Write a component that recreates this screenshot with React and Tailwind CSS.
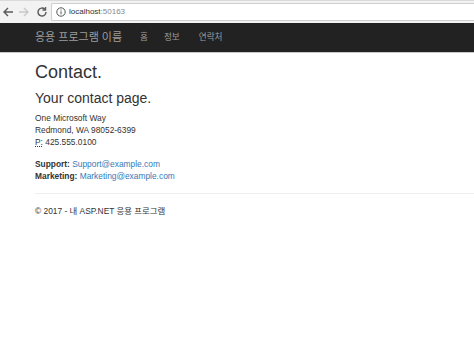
import React from "react";

export default function App() {
  const font = { fontFamily: '"Liberation Sans", "Noto Sans CJK KR", Arial, sans-serif' };
  return (
    <div className="w-[474px] h-[337px] bg-white overflow-hidden text-[#333]" style={font}>
      {/* browser toolbar */}
      <div className="h-[23px] bg-[#f2f2f2] border-t border-[#dadada] flex items-center">
        <div className="flex items-center gap-[4px] pl-[2px] w-[51px]">
          <svg width="12" height="12" viewBox="0 0 12 12" fill="none" stroke="#5a5a5a" strokeWidth="1.4">
            <path d="M11 6H2M6 2L2 6l4 4" />
          </svg>
          <svg width="12" height="12" viewBox="0 0 12 12" fill="none" stroke="#c8c8c8" strokeWidth="1.4">
            <path d="M1 6h9M6 2l4 4-4 4" />
          </svg>
          <svg width="12" height="12" viewBox="0 0 12 12" fill="none" stroke="#5a5a5a" strokeWidth="1.4" className="ml-[2px]">
            <path d="M10 6a4 4 0 1 1-1.2-2.8" />
            <path d="M9.5 1v3h-3" />
          </svg>
        </div>
        <div className="flex-1 h-[18px] bg-white border border-[#cfcfcf] border-r-0 rounded-l-[2px] flex items-center pl-[4px] gap-[3px]">
          <svg width="10" height="10" viewBox="0 0 10 10" fill="none" stroke="#555" strokeWidth="1">
            <circle cx="5" cy="5" r="4.2" />
            <path d="M5 4.3v3M5 2.5v1" />
          </svg>
          <span className="text-[8px] text-[#333] leading-none">localhost<span className="text-[#888]">:50163</span></span>
        </div>
      </div>
      {/* navbar */}
      <div className="h-[30px] bg-[#222] border-b border-[#c8c8c8] flex items-center pl-[35px] text-[#9d9d9d]">
        <span className="text-[11px] w-[105px] shrink-0">응용 프로그램 이름</span>
        <span className="text-[8.6px]">홈</span>
        <span className="text-[8.6px] ml-[16px]">정보</span>
        <span className="text-[8.6px] ml-[19px]">연락처</span>
      </div>
      {/* body */}
      <div className="pl-[35px]">
        <h2 className="text-[18px] leading-none mt-[10px]">Contact.</h2>
        <h3 className="text-[14px] leading-none mt-[10px]">Your contact page.</h3>
        <address className="not-italic text-[8.4px] leading-[12px] mt-[7px]">
          One Microsoft Way<br />
          Redmond, WA 98052-6399<br />
          <abbr title="Phone" className="underline decoration-dotted">P:</abbr> 425.555.0100
        </address>
        <address className="not-italic text-[8.4px] leading-[12px] mt-[10px]">
          <strong>Support:</strong> <a className="text-[#337ab7]">Support@example.com</a><br />
          <strong>Marketing:</strong> <a className="text-[#337ab7]">Marketing@example.com</a>
        </address>
        <div className="border-t border-[#eee] mt-[11px]"></div>
        <footer className="text-[8.4px] leading-[12px] mt-[11px]">© 2017 - 내 ASP.NET 응용 프로그램</footer>
      </div>
    </div>
  );
}
